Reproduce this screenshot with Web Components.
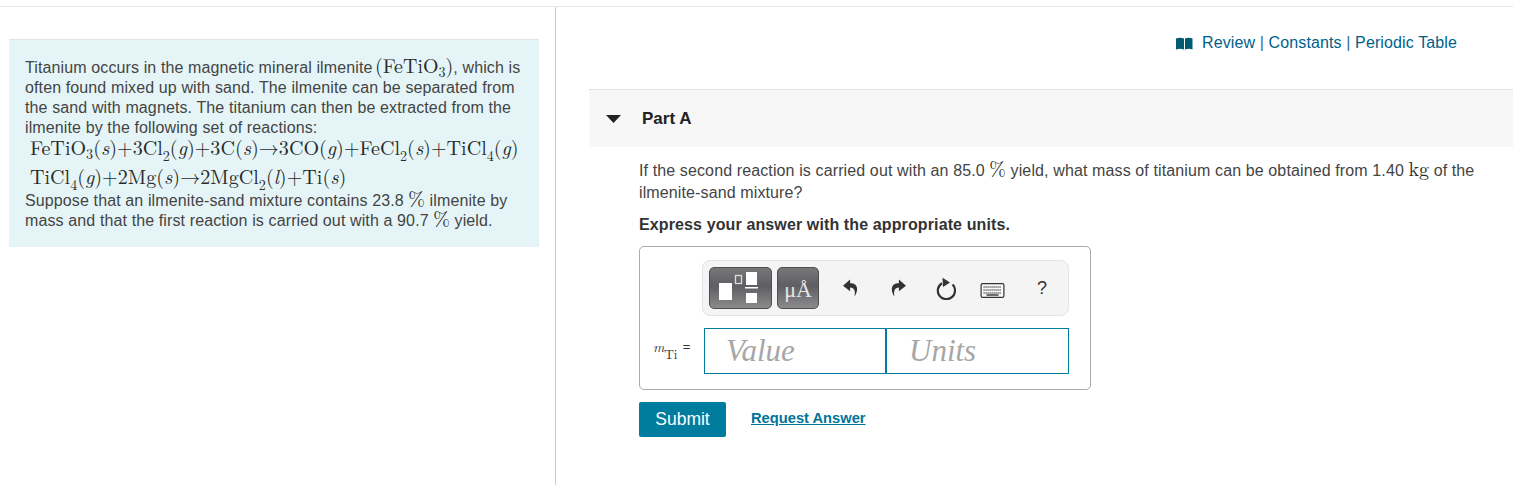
<!DOCTYPE html>
<html>
<head>
<meta charset="utf-8">
<style>
  html, body { margin: 0; padding: 0; background: #fff; }
  body { width: 1515px; height: 485px; overflow: hidden; font-family: "Liberation Sans", Arial, sans-serif; }
</style>
</head>
<body>
<item-page></item-page>

<script>
const MATH = `"Latin Modern Roman", "Liberation Serif", serif`;

class ChemMath extends HTMLElement {
  constructor() {
    super();
    this.attachShadow({ mode: "open" });
    // no whitespace round the slot, it would render as a space in the bigger font
    this.shadowRoot.innerHTML = `<style>:host { display: inline; font-family: ${MATH}; font-size: 1.25em; line-height: 0; letter-spacing: 0; color: #2b2b2b; }</style><slot></slot>`;
  }
}
customElements.define("chem-math", ChemMath);

class IntroPanel extends HTMLElement {
  constructor() {
    super();
    this.attachShadow({ mode: "open" });
    this.shadowRoot.innerHTML = `
      <style>
        :host { display: block; width: 556px; height: 478px; padding-top: 32px; box-sizing: border-box; border-right: 1px solid #c4cdd9; flex: none; }
        .box {
          margin-left: 9px; width: 530px; height: 208px; box-sizing: border-box;
          padding: 18px 16px 0; background: #e5f5f7; border-top: 1px solid #dde5e6;
          font-size: 16px; line-height: 20px; letter-spacing: .12px; color: #444; white-space: nowrap;
        }
        .eq { font-family: ${MATH}; font-size: 20.1px; letter-spacing: 0; color: #2b2b2b; padding-left: 5px; }
        .eq.a { height: 22px; line-height: 22px; margin-top: -2px; }
        .eq.b { height: 33px; line-height: 36px; }
        sub { font-size: 0.7em; line-height: 0; vertical-align: -0.4em; }
        sub.low { vertical-align: -0.25em; }
        i { font-style: italic; }
        .tight { margin-left: 2.4px; }
      </style>
      <div class="box">
        <div>Titanium occurs in the magnetic mineral ilmenite<chem-math class="tight">(FeTiO<sub class="low">3</sub>)</chem-math>, which is<br>
        often found mixed up with sand. The ilmenite can be separated from<br>
        the sand with magnets. The titanium can then be extracted from the<br>
        ilmenite by the following set of reactions:</div>
        <div class="eq a">FeTiO<sub class="low">3</sub>(<i>s</i>)+3Cl<sub>2</sub>(<i>g</i>)+3C(<i>s</i>)→3CO(<i>g</i>)+FeCl<sub>2</sub>(<i>s</i>)+TiCl<sub>4</sub>(<i>g</i>)</div>
        <div class="eq b">TiCl<sub>4</sub>(<i>g</i>)+2Mg(<i>s</i>)→2MgCl<sub>2</sub>(<i>l</i>)+Ti(<i>s</i>)</div>
        <div>Suppose that an ilmenite-sand mixture contains 23.8 <chem-math>%</chem-math> ilmenite by<br>
        mass and that the first reaction is carried out with a 90.7 <chem-math>%</chem-math> yield.</div>
      </div>
    `;
  }
}
customElements.define("intro-panel", IntroPanel);

class ResourceLinks extends HTMLElement {
  constructor() {
    super();
    this.attachShadow({ mode: "open" });
    this.shadowRoot.innerHTML = `
      <style>
        :host { display: flex; justify-content: flex-end; align-items: center; height: 20px; padding: 26px 56px 0 0; font-size: 16px; letter-spacing: .12px; color: #00618a; }
        svg { margin-right: 9px; }
        .sep { color: #2f6f98; }
      </style>
      <svg width="17" height="13" viewBox="0 0 17 13"><path fill="#005a70" d="M0 1.5 Q4 0 8 1.5 V12.5 Q4 11 0 12.5Z M9 1.5 Q13 0 16.5 1.5 V12.5 Q13 11 9 12.5Z"/></svg>
      <span>Review <span class="sep">|</span> Constants <span class="sep">|</span> Periodic Table</span>
    `;
  }
}
customElements.define("resource-links", ResourceLinks);

class PartHeader extends HTMLElement {
  constructor() {
    super();
    this.attachShadow({ mode: "open" });
    this.shadowRoot.innerHTML = `
      <style>
        :host { display: flex; align-items: center; height: 57px; margin-left: 33px; background: #f7f7f7; border-top: 1px solid #e3e3e3; font-size: 17px; font-weight: bold; color: #222; }
        svg { margin: 0 21px 0 17px; }
      </style>
      <svg width="15" height="8" viewBox="0 0 15 8"><path fill="#222" d="M0 0H15L7.5 8Z"/></svg>
      <slot></slot>
    `;
  }
}
customElements.define("part-header", PartHeader);

class MathToolbar extends HTMLElement {
  constructor() {
    super();
    this.attachShadow({ mode: "open" });
    this.shadowRoot.innerHTML = `
      <style>
        :host { display: flex; align-items: center; width: 367px; height: 56px; box-sizing: border-box; padding-left: 6px; margin-left: 62px; background: #f4f4f4; border: 1px solid #e4e4e4; border-radius: 8px; }
        .tool { display: flex; align-items: center; justify-content: center; height: 42px; box-sizing: border-box; border: 1px solid #4f4f52; border-radius: 5px; background: linear-gradient(#77777a, #5f5f63 45%, #8b8b8e); color: #e6e6e6; }
        .tpl { width: 63px; margin-right: 5px; }
        .unit { width: 42px; font-family: "Liberation Serif", serif; font-size: 22px; padding-top: 3px; }
        .q { font-size: 18px; color: #333; }
      </style>
      <div class="tool tpl">
        <svg width="50" height="38" viewBox="0 0 50 38">
          <rect x="3" y="14" width="13" height="17" fill="#fff"/>
          <rect x="19.5" y="6.5" width="6" height="8" fill="none" stroke="#ddd" stroke-width="1.3"/>
          <rect x="30" y="3" width="11" height="13" fill="#fff"/>
          <rect x="29" y="18" width="13" height="1.5" fill="#fff"/>
          <rect x="30" y="24" width="11" height="10" fill="#fff"/>
        </svg>
      </div>
      <div class="tool unit">μÅ</div>
      <svg style="margin-left:24px" width="16" height="19" viewBox="0 0 18 20"><path fill="#333" d="M8 0 L0 7 L8 13 V9 C13 9 14 13 13 19 C17 13 18 4 8 4 Z"/></svg>
      <svg style="margin-left:31px" width="16" height="19" viewBox="0 0 18 20"><path fill="#333" d="M10 0 L18 7 L10 13 V9 C5 9 4 13 5 19 C1 13 0 4 10 4 Z"/></svg>
      <svg style="margin-left:30px" width="20" height="23" viewBox="0 0 20 23"><path fill="none" stroke="#333" stroke-width="2.2" d="M6 6.2 A8.6 8.6 0 1 0 16.6 7.6"/><path fill="#333" d="M6.5 0.8 L14 5.4 L7 10Z"/></svg>
      <svg style="margin:5px 0 0 24px" width="25" height="15" viewBox="0 0 24 15">
        <rect x="0.6" y="0.6" width="22.8" height="13.8" rx="1.5" fill="#f8f8f8" stroke="#333" stroke-width="1.2"/>
        <path stroke="#555" stroke-width="1.6" stroke-dasharray="1.2 .8" d="M3 4H21M3 7H21M3 10H21"/>
        <path stroke="#333" stroke-width="1.4" d="M6 12H18"/>
      </svg>
      <span class="q" style="margin-left:32px">?</span>
    `;
  }
}
customElements.define("math-toolbar", MathToolbar);

class AnswerField extends HTMLElement {
  constructor() {
    super();
    this.attachShadow({ mode: "open" });
    this.shadowRoot.innerHTML = `
      <style>
        :host { display: flex; align-items: center; box-sizing: border-box; height: 46px; border: 1px solid #007c9e; padding-left: 21px; background: #fff; font-family: "Liberation Serif", serif; font-style: italic; font-size: 31px; color: #a6a6a6; flex: none; }
      </style>
      <slot></slot>
    `;
  }
}
customElements.define("answer-field", AnswerField);

class AnswerBox extends HTMLElement {
  constructor() {
    super();
    this.attachShadow({ mode: "open" });
    this.shadowRoot.innerHTML = `
      <style>
        :host { display: block; width: 452px; height: 144px; box-sizing: border-box; padding-top: 13px; border: 1px solid #aaa; border-radius: 5px; }
        .row { display: flex; align-items: center; margin-top: 12px; }
        .label { width: 64px; box-sizing: border-box; padding: 0 0 8px 13px; font-family: ${MATH}; color: #333; white-space: nowrap; line-height: 20px; }
        .label i { font-size: 14px; vertical-align: 2px; }
        .label sub { font-size: 13px; vertical-align: -5px; line-height: 0; }
        .label span { font-size: 13px; vertical-align: 3px; font-family: "Liberation Sans", sans-serif; }
        answer-field.v { width: 182px; }
        answer-field.u { width: 183px; padding-left: 22px; }
      </style>
      <math-toolbar></math-toolbar>
      <div class="row">
        <div class="label"><i>m</i><sub>Ti</sub> <span>=</span></div>
        <answer-field class="v">Value</answer-field>
        <answer-field class="u">Units</answer-field>
      </div>
    `;
  }
}
customElements.define("answer-box", AnswerBox);

class QuestionPanel extends HTMLElement {
  constructor() {
    super();
    this.attachShadow({ mode: "open" });
    this.shadowRoot.innerHTML = `
      <style>
        :host { display: block; flex: 1; min-width: 0; }
        .links { height: 82px; }
        .body { margin-left: 83px; padding-top: 13px; font-size: 16px; line-height: 22px; letter-spacing: .12px; color: #444; }
        .q { white-space: nowrap; }
        .hint { font-weight: bold; color: #333; margin-top: 10px; height: 22px; letter-spacing: .12px; }
        answer-box { margin-top: 10px; letter-spacing: 0; }
        .actions { display: flex; align-items: center; margin-top: 12px; letter-spacing: 0; }
        .submit { display: flex; align-items: center; justify-content: center; width: 87px; height: 35px; box-sizing: border-box; padding-bottom: 1px; border-radius: 2px; background: #007c9e; color: #fff; font-size: 17.5px; }
        .req { margin-left: 25px; padding-bottom: 3px; font-size: 14.7px; font-weight: bold; color: #00749a; text-decoration: underline; }
      </style>
      <div class="links"><resource-links></resource-links></div>
      <part-header>Part A</part-header>
      <div class="body">
        <div class="q">If the second reaction is carried out with an 85.0 <chem-math>%</chem-math> yield, what mass of titanium can be obtained from 1.40 <chem-math>kg</chem-math> of the<br>
        ilmenite-sand mixture?</div>
        <div class="hint">Express your answer with the appropriate units.</div>
        <answer-box></answer-box>
        <div class="actions">
          <div class="submit">Submit</div>
          <div class="req">Request Answer</div>
        </div>
      </div>
    `;
  }
}
customElements.define("question-panel", QuestionPanel);

class ItemPage extends HTMLElement {
  constructor() {
    super();
    this.attachShadow({ mode: "open" });
    this.shadowRoot.innerHTML = `
      <style>
        :host { display: block; padding-top: 6px; }
        .wrap { display: flex; border-top: 1px solid #e6e6e6; width: 1513px; }
      </style>
      <div class="wrap">
        <intro-panel></intro-panel>
        <question-panel></question-panel>
      </div>
    `;
  }
}
customElements.define("item-page", ItemPage);
</script>
</body>
</html>
